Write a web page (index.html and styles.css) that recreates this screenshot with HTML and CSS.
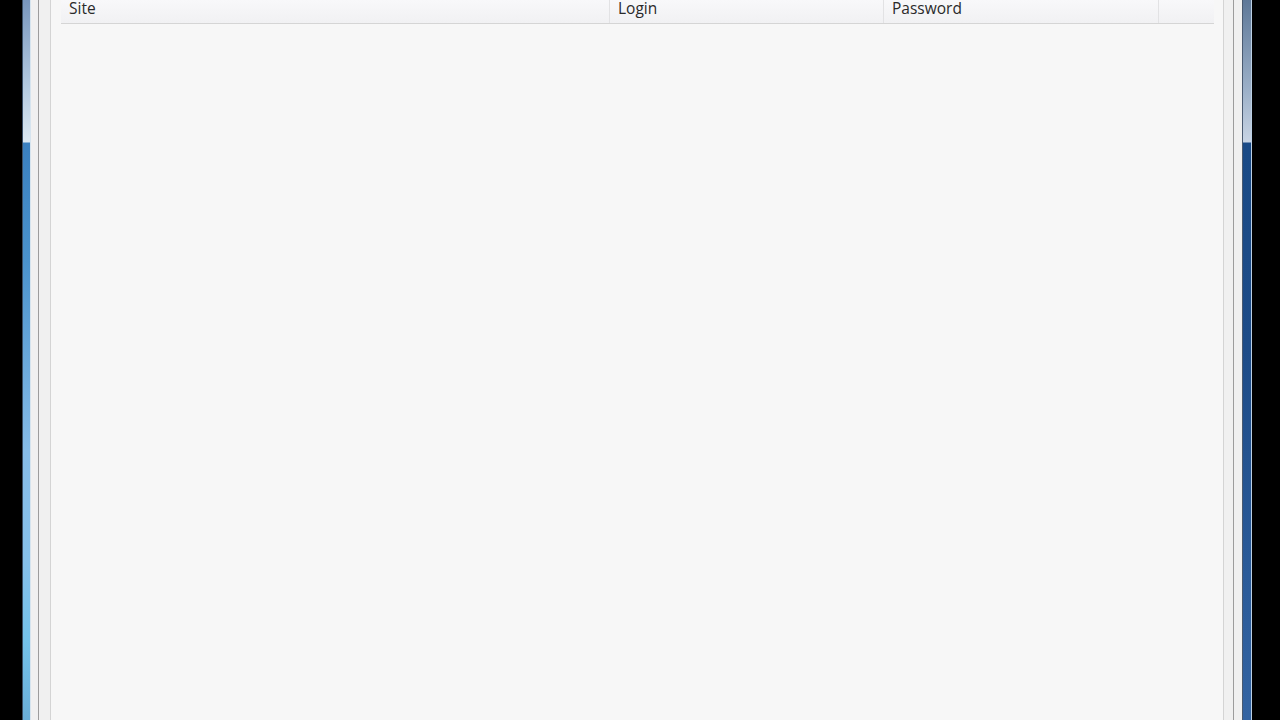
FILE: index.html
```html
<!DOCTYPE html>
<html>
<head>
<meta charset="utf-8">
<link rel="stylesheet" href="styles.css">
</head>
<body>
<div class="screen">
  <div class="void-left"></div>
  <div class="glass glass-left"></div>
  <div class="frame">
    <div class="inner">
      <div class="content">
        <div class="header">
          <div class="col col-site">Site</div>
          <div class="col col-login">Login</div>
          <div class="col col-pass">Password</div>
          <div class="col col-rest"></div>
        </div>
      </div>
    </div>
  </div>
  <div class="glass glass-right"></div>
  <div class="void-right"></div>
</div>
</body>
</html>
```
FILE: styles.css
```css
html, body {
  margin: 0;
  padding: 0;
  background: #000;
}
.screen {
  display: flex;
  width: 1280px;
  height: 720px;
  overflow: hidden;
  background: #000;
}
.void-left {
  width: 22px;
  flex: none;
}
.void-right {
  width: 28px;
  flex: none;
}
.glass {
  flex: none;
  box-sizing: border-box;
}
.glass-left {
  width: 9px;
  border-left: 1px solid #3b5068;
  border-right: 1px solid #d6e4ee;
  background: linear-gradient(to bottom, #7896bd 0px, #b6cce2 90px, #dce9f3 142px, #3a80c0 143px, #4a92cc 260px, #86bce8 450px, #86c0ea 560px, #74c2ea 640px, #6aaed8 720px);
}
.glass-right {
  width: 10px;
  border-left: 1px solid #4a5a70;
  border-right: 1px solid #bcd0e4;
  background: linear-gradient(to bottom, #5e7898 0px, #9cb0c8 90px, #c8d4e4 142px, #1a4a86 143px, #1e4c88 350px, #2a5a98 560px, #3464a2 720px);
}
.frame {
  flex: none;
  width: 1211px;
  box-sizing: border-box;
  background: #f0f0f0;
  padding: 0 8px 0 7px;
  display: flex;
}
.inner {
  flex: 1;
  display: flex;
  border-left: 1px solid #9c9c9c;
  border-right: 1px solid #9c9c9c;
  padding: 0 9px 0 11px;
  background: #f0f0f0;
}
.content {
  flex: 1;
  background: #f7f7f7;
  border-left: 1px solid #d4d4d4;
  border-right: 1px solid #d4d4d4;
  padding: 0 9px 0 10px;
}
.header {
  display: flex;
  height: 23px;
  border-bottom: 1px solid #d5d5d5;
  background: linear-gradient(to bottom, #f8f8fa 0px, #f1f1f3 23px);
}
.col {
  box-sizing: border-box;
  height: 23px;
  padding-left: 8px;
  border-right: 1px solid #e2e2e4;
  font-family: "Open Sans", "Noto Sans", sans-serif;
  font-size: 15.5px;
  line-height: 17px;
  color: #2a2a2a;
}
.col-site { width: 549px; }
.col-login { width: 274px; }
.col-pass { width: 275px; }
.col-rest { flex: 1; border-right: none; }
```
